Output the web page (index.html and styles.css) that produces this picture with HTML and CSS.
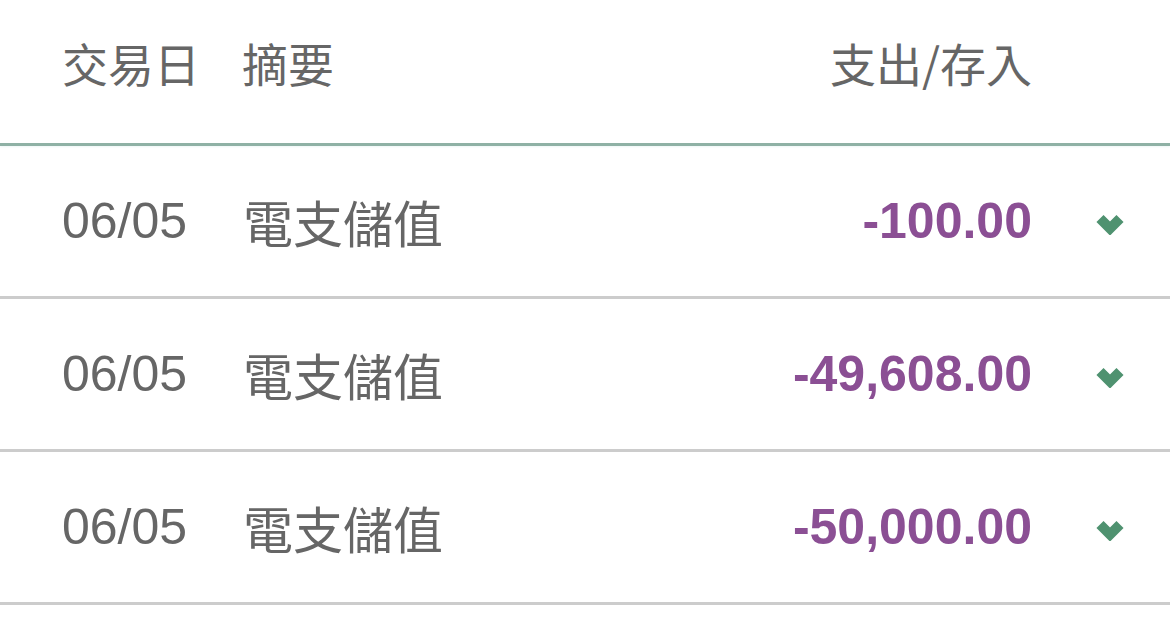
FILE: index.html
```html
<!DOCTYPE html>
<html lang="zh-Hant">
<head>
<meta charset="utf-8">
<link rel="stylesheet" href="styles.css">
</head>
<body>
<div class="table">
  <div class="head">
    <div class="c-date">交易日</div>
    <div class="c-desc">摘要</div>
    <div class="c-amt">支出/存入</div>
    <div class="c-ico"></div>
  </div>
  <div class="row">
    <div class="c-date">06/05</div>
    <div class="c-desc">電支儲值</div>
    <div class="c-amt amt">-100.00</div>
    <div class="c-ico"><svg class="chev" viewBox="0 0 30 22"><polyline points="5,5.5 15,15.5 25,5.5"/></svg></div>
  </div>
  <div class="row">
    <div class="c-date">06/05</div>
    <div class="c-desc">電支儲值</div>
    <div class="c-amt amt">-49,608.00</div>
    <div class="c-ico"><svg class="chev" viewBox="0 0 30 22"><polyline points="5,5.5 15,15.5 25,5.5"/></svg></div>
  </div>
  <div class="row">
    <div class="c-date">06/05</div>
    <div class="c-desc">電支儲值</div>
    <div class="c-amt amt">-50,000.00</div>
    <div class="c-ico"><svg class="chev" viewBox="0 0 30 22"><polyline points="5,5.5 15,15.5 25,5.5"/></svg></div>
  </div>
</div>
</body>
</html>
```
FILE: styles.css
```css
html, body {
  margin: 0;
  padding: 0;
  background: #ffffff;
}
body {
  font-family: "Liberation Sans", "Noto Sans CJK TC", sans-serif;
  color: #666666;
}
.table {
  display: flex;
  flex-direction: column;
}
.head {
  display: flex;
  align-items: center;
  height: 123px;
  padding: 0 0 20px 62px;
  font-size: 46px;
  font-family: "Noto Sans CJK TC", sans-serif;
  border-bottom: 3px solid #8fb1a5;
  box-shadow: 0 1px 2px #eef7f6;
}
.row {
  display: flex;
  align-items: center;
  height: 150px;
  padding-left: 62px;
  font-size: 50px;
  border-bottom: 3px solid #cccccc;
}
.c-date {
  width: 180px;
  flex: none;
}
.c-desc {
  flex: 1;
  font-family: "Noto Sans CJK TC", sans-serif;
}
.row .c-desc {
  padding-left: 1px;
}
.c-amt {
  text-align: right;
  white-space: nowrap;
}
.amt {
  font-weight: bold;
  color: #8b4f94;
}
.c-ico {
  width: 138px;
  flex: none;
  display: flex;
  align-items: center;
  padding-left: 63px;
  box-sizing: border-box;
}
.chev {
  width: 30px;
  height: 22px;
  display: block;
  margin-top: 6px;
}
.chev polyline {
  fill: none;
  stroke: #4f9270;
  stroke-width: 10;
  stroke-linejoin: miter;
  stroke-linecap: butt;
}
```
